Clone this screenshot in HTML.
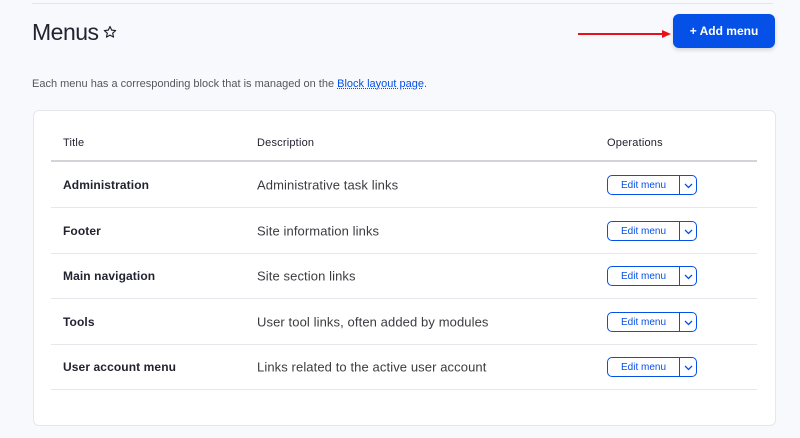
<!DOCTYPE html>
<html><head><style>
body{margin:0;width:800px;height:438px;background:#f8f9fd;font-family:"Liberation Sans",sans-serif;position:relative;overflow:hidden;color:#222330}
.topline{position:absolute;left:32px;top:3px;width:741px;height:1px;background:#e4e5ea}
h1{position:absolute;left:32px;top:19px;margin:0;font-size:23px;font-weight:400;letter-spacing:-0.5px}
.star{position:absolute;left:103px;top:25px}
.add{position:absolute;left:673px;top:14px;width:102px;height:34px;background:#0550e6;border-radius:6px;color:#fff;font-weight:bold;font-size:12px;line-height:34px;text-align:center;box-shadow:0 2px 4px rgba(0,0,0,.15)}
.arrow{position:absolute;left:578px;top:29px}
.desc{position:absolute;left:32px;top:78px;font-size:11px;color:#55565b}
.desc a{color:#0550e6;text-decoration:underline dotted}
.card{position:absolute;left:33px;top:110px;width:741px;height:314px;background:#fff;border:1px solid #e6e7ec;border-radius:6px}
.row{position:absolute;left:51px;width:706px;border-bottom:1px solid #e6e7ec;font-size:12px}
.row span{position:absolute;top:50%;transform:translateY(-50%);white-space:nowrap}
.c1{left:12px;font-weight:bold;letter-spacing:0.1px}.c2{left:206px;color:#3b3c40;font-size:13px;letter-spacing:0.1px}
.btn{position:absolute;left:556px;top:50%;margin-top:-10px;width:88px;height:18px;border:1px solid #0550e6;border-radius:5px;font-size:10px;color:#0550e6}
.btn i{position:absolute;left:0;top:1px;width:71px;text-align:center;line-height:18px;font-style:normal}
.btn b{position:absolute;left:71px;top:0;width:1px;height:18px;background:#0550e6}
.btn svg{position:absolute;left:76px;top:7px}
.hdr{top:125px;height:35px;border-bottom:2px solid #d3d4d9;font-size:11px;letter-spacing:0.2px}
.hdr span{color:#222330}
</style></head><body>
<div class="topline"></div>
<h1>Menus</h1>
<svg class="star" width="14" height="14" viewBox="0 0 24 24"><path d="M12 2.5l2.9 6.3 6.8.7-5.1 4.6 1.5 6.7L12 17.4l-6.1 3.4 1.5-6.7L2.3 9.5l6.8-.7z" fill="none" stroke="#222330" stroke-width="2" stroke-linejoin="round"/></svg>
<svg class="arrow" width="94" height="10"><line x1="0" y1="5" x2="86" y2="5" stroke="#e8101a" stroke-width="2"/><path d="M84 1l9 4-9 4z" fill="#e8101a"/></svg>
<div class="add">+ Add menu</div>
<div class="desc">Each menu has a corresponding block that is managed on the <a>Block layout page</a>.</div>
<div class="card"></div>
<div class="row hdr"><span style="left:12px">Title</span><span style="left:206px">Description</span><span style="left:556px">Operations</span></div>
<div class="row" style="top:162px;height:45px"><span class="c1">Administration</span><span class="c2">Administrative task links</span><div class="btn"><i>Edit menu</i><b></b><svg width="9" height="6"><path d="M1 1l3.5 3.5L8 1" fill="none" stroke="#0550e6" stroke-width="1.3"/></svg></div></div>
<div class="row" style="top:208px;height:45px"><span class="c1">Footer</span><span class="c2">Site information links</span><div class="btn"><i>Edit menu</i><b></b><svg width="9" height="6"><path d="M1 1l3.5 3.5L8 1" fill="none" stroke="#0550e6" stroke-width="1.3"/></svg></div></div>
<div class="row" style="top:254px;height:44px"><span class="c1">Main navigation</span><span class="c2">Site section links</span><div class="btn"><i>Edit menu</i><b></b><svg width="9" height="6"><path d="M1 1l3.5 3.5L8 1" fill="none" stroke="#0550e6" stroke-width="1.3"/></svg></div></div>
<div class="row" style="top:299px;height:45px"><span class="c1">Tools</span><span class="c2">User tool links, often added by modules</span><div class="btn"><i>Edit menu</i><b></b><svg width="9" height="6"><path d="M1 1l3.5 3.5L8 1" fill="none" stroke="#0550e6" stroke-width="1.3"/></svg></div></div>
<div class="row" style="top:345px;height:44px"><span class="c1">User account menu</span><span class="c2">Links related to the active user account</span><div class="btn"><i>Edit menu</i><b></b><svg width="9" height="6"><path d="M1 1l3.5 3.5L8 1" fill="none" stroke="#0550e6" stroke-width="1.3"/></svg></div></div>
</body></html>
